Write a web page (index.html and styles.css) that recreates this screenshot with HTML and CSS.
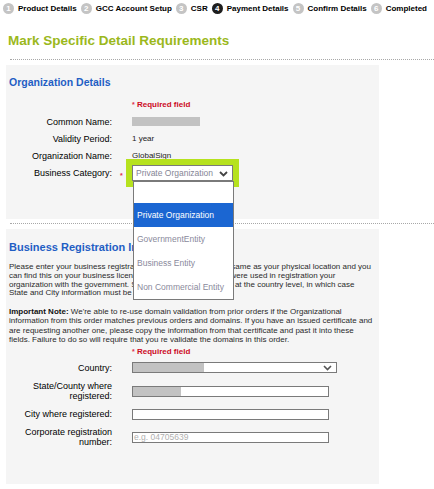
FILE: index.html
```html
<!DOCTYPE html>
<html>
<head>
<meta charset="utf-8">
<link rel="stylesheet" href="styles.css">
</head>
<body>
<div class="steps">
  <div class="step"><span class="num">1</span><span class="lbl">Product Details</span></div>
  <div class="step"><span class="num">2</span><span class="lbl">GCC Account Setup</span></div>
  <div class="step"><span class="num">3</span><span class="lbl">CSR</span></div>
  <div class="step active"><span class="num">4</span><span class="lbl">Payment Details</span></div>
  <div class="step"><span class="num">5</span><span class="lbl">Confirm Details</span></div>
  <div class="step"><span class="num">6</span><span class="lbl">Completed</span></div>
</div>

<h1 class="title">Mark Specific Detail Requirements</h1>
<div class="dots dots-top"></div>

<div class="panel panel-org">
  <h2 class="sec">Organization Details</h2>
  <div class="form">
    <div class="row row-req">
      <div class="lab"></div><div class="star"></div>
      <div class="val"><span class="req"><span class="rstar">*</span> Required field</span></div>
    </div>
    <div class="row">
      <div class="lab">Common Name:</div><div class="star"></div>
      <div class="val"><span class="redact redact-cn"></span></div>
    </div>
    <div class="row">
      <div class="lab">Validity Period:</div><div class="star"></div>
      <div class="val">1 year</div>
    </div>
    <div class="row">
      <div class="lab">Organization Name:</div><div class="star"></div>
      <div class="val">GlobalSign</div>
    </div>
    <div class="row row-cat">
      <div class="lab">Business Category:</div><div class="star"><span class="rstar">*</span></div>
      <div class="val">
        <div class="select-wrap">
          <div class="select focus">
            <span class="sel-text">Private Organization</span>
            <svg class="chev" width="9" height="6" viewBox="0 0 9 6"><path d="M1 1 L4.5 4.5 L8 1" fill="none" stroke="#444" stroke-width="1.8"/></svg>
          </div>
          <div class="options">
            <div class="opt opt-empty"></div>
            <div class="opt opt-sel">Private Organization</div>
            <div class="opt">GovernmentEntity</div>
            <div class="opt">Business Entity</div>
            <div class="opt">Non Commercial Entity</div>
          </div>
        </div>
      </div>
    </div>
  </div>
</div>
<div class="dots dots-mid"></div>

<div class="panel panel-biz">
  <h2 class="sec sec-biz">Business Registration Information</h2>
  <p class="para para-intro">Please enter your business registration data. It may not be the same as your physical location and you<br>can find this on your business license or other documents that were used in registration your<br>organization with the government. Some countries only register at the country level, in which case<br>State and City information must be the same as the country.</p>
  <p class="para para-note"><b>Important Note:</b> We're able to re-use domain validation from prior orders if the Organizational information from this order matches previous orders and domains. If you have an issued certificate and are requesting another one, please copy the information from that certificate and past it into these fields. Failure to do so will require that you re validate the domains in this order.</p>
  <div class="form form-biz">
    <div class="row row-req2">
      <div class="lab"></div><div class="star"></div>
      <div class="val"><span class="req"><span class="rstar">*</span> Required field</span></div>
    </div>
    <div class="row row-f">
      <div class="lab">Country:</div><div class="star"></div>
      <div class="val">
        <div class="field field-country"><span class="redact redact-country"></span>
          <svg class="chev2" width="9" height="6" viewBox="0 0 9 6"><path d="M1 1 L4.5 4.5 L8 1" fill="none" stroke="#555" stroke-width="1.6"/></svg>
        </div>
      </div>
    </div>
    <div class="row row-f">
      <div class="lab">State/County where<br>registered:</div><div class="star"></div>
      <div class="val"><div class="field"><span class="redact redact-state"></span></div></div>
    </div>
    <div class="row row-f">
      <div class="lab">City where registered:</div><div class="star"></div>
      <div class="val"><div class="field"></div></div>
    </div>
    <div class="row row-f">
      <div class="lab">Corporate registration<br>number:</div><div class="star"></div>
      <div class="val"><div class="field"><span class="ph">e.g. 04705639</span></div></div>
    </div>
  </div>
</div>
</body>
</html>
```

FILE: styles.css
```css
* { box-sizing: border-box; }
body {
  margin: 0;
  font-family: "Liberation Sans", Arial, sans-serif;
  color: #222;
  background: #fff;
  width: 434px;
  overflow: hidden;
}
.steps {
  display: flex;
  align-items: center;
  height: 16px;
  padding-left: 3px;
  font-size: 8px;
  font-weight: bold;
  color: #000;
  white-space: nowrap;
}
.step {
  display: flex;
  align-items: center;
  margin-right: 4px;
}
.num {
  width: 11px;
  height: 11px;
  border-radius: 50%;
  background: #c4c4c4;
  color: #fff;
  font-size: 8px;
  line-height: 11px;
  text-align: center;
  margin-right: 4px;
}
.step.active .num { background: #1e1e1e; }
.title {
  margin: 17px 0 0 8px;
  font-size: 13.5px;
  line-height: 16px;
  color: #9bb81c;
  font-weight: bold;
}
.dots {
  border-top: 1px dotted #a8a8a8;
  margin-left: 10px;
}
.dots-top { margin-top: 10px; }
.dots-mid { margin-top: 4px; }
.panel {
  margin-left: 6px;
  width: 373px;
  background: #f5f5f5;
}
.panel-org {
  margin-top: 5px;
  height: 154px;
  padding-top: 11px;
}
.panel-biz {
  margin-top: 5px;
  height: 255px;
  padding-top: 12px;
}
.sec {
  margin: 0 0 0 3px;
  font-size: 10.5px;
  line-height: 13px;
  color: #1f5ec4;
  font-weight: bold;
}
.sec-biz { font-size: 11px; }
.form { display: flex; flex-direction: column; }
.row {
  display: grid;
  grid-template-columns: 106px 20px 1fr;
  align-items: center;
  height: 17px;
}
.row-req { margin-top: 7px; }
.lab {
  text-align: right;
  font-size: 9px;
  line-height: 10px;
  color: #000;
}
.star { padding-left: 8px; }
.val {
  font-size: 8px;
  color: #222;
}
.req {
  color: #cc0a1e;
  font-weight: bold;
  font-size: 8px;
}
.rstar {
  color: #e0304a;
  font-size: 7px;
  font-weight: bold;
}
.redact {
  display: block;
  background: #c2c2c2;
  height: 9px;
}
.redact-cn { width: 68px; }
.row-cat { height: 18px; margin-top: 0; }
.select-wrap { position: relative; width: 101px; }
.select {
  height: 16px;
  border: 1px solid #7a7a7a;
  background: #fff;
  display: flex;
  align-items: center;
  padding-left: 3px;
  position: relative;
}
.select.focus { outline: 6px solid #b6e21e; outline-offset: 0; }
.sel-text { color: #858595; font-size: 8.5px; }
.chev { position: absolute; right: 4px; top: 5px; }
.options {
  position: absolute;
  left: 1px;
  top: 16px;
  width: 101px;
  border: 1px solid #7a7a7a;
  background: #fff;
  z-index: 5;
}
.opt {
  height: 24px;
  line-height: 24px;
  padding-left: 3px;
  font-size: 8.5px;
  color: #8a8a9c;
}
.opt-empty { height: 21px; }
.opt-sel { background: #1b66d2; color: #fff; }
.para {
  margin: 9px 2px 0 3px;
  font-size: 8px;
  line-height: 8.8px;
  color: #2a2a2a;
}
.para-intro { white-space: nowrap; }
.para-note { margin-top: 9px; margin-right: 6px; line-height: 9.2px; }
.para-note b { color: #111; }
.row-req2 { height: 14px; margin-top: 0; }
.row-f { height: 20px; margin-top: 3px; }
.row-req2 + .row-f { margin-top: 0; }
.field {
  width: 197px;
  height: 11px;
  border: 1px solid #7a7a7a;
  background: #fff;
  position: relative;
  margin-top: 1px;
}
.field .redact { height: 9px; }
.field-country { width: 205px; margin-top: -1px; }
.redact-country { width: 71px; }
.redact-state { width: 48px; }
.chev2 { position: absolute; right: 4px; top: 2px; }
.ph {
  display: block;
  color: #b0b0b0;
  font-size: 8.5px;
  line-height: 9px;
  padding-left: 1px;
}
```
